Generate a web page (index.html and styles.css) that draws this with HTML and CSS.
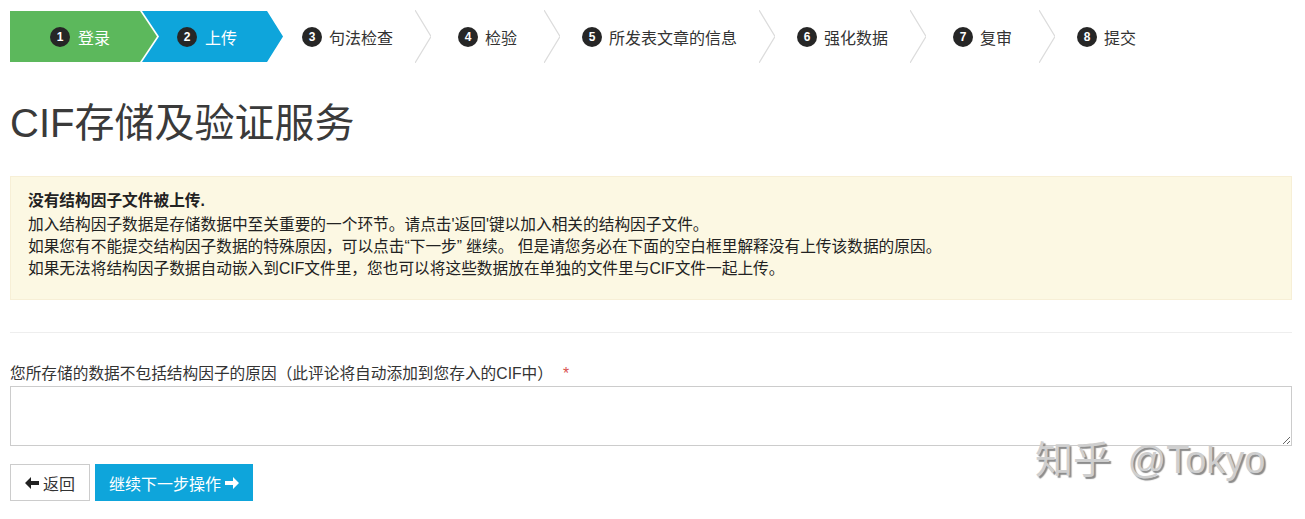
FILE: index.html
```html
<!DOCTYPE html>
<html lang="zh-CN">
<head>
  <meta charset="UTF-8" />
  <meta name="viewport" content="width=device-width, initial-scale=1.0"/>
  <title>CIF存储及验证服务</title>
  <link rel="stylesheet" href="styles.css">
</head>
<body>
<div class="page">

  <!-- 步骤条 -->
  <div class="steps">
    <div class="step done"><span class="num">1</span><span>登录</span></div>
    <div class="step current"><span class="num">2</span><span>上传</span></div>
    <div class="step"><span class="num">3</span><span>句法检查</span></div>
    <svg class="chevron" viewBox="0 0 16 53"><polyline points="0,0 16,26.5 0,53"/></svg>
    <div class="step short"><span class="num">4</span><span>检验</span></div>
    <svg class="chevron" viewBox="0 0 16 53"><polyline points="0,0 16,26.5 0,53"/></svg>
    <div class="step"><span class="num">5</span><span>所发表文章的信息</span></div>
    <svg class="chevron" viewBox="0 0 16 53"><polyline points="0,0 16,26.5 0,53"/></svg>
    <div class="step"><span class="num">6</span><span>强化数据</span></div>
    <svg class="chevron" viewBox="0 0 16 53"><polyline points="0,0 16,26.5 0,53"/></svg>
    <div class="step short"><span class="num">7</span><span>复审</span></div>
    <svg class="chevron" viewBox="0 0 16 53"><polyline points="0,0 16,26.5 0,53"/></svg>
    <div class="step"><span class="num">8</span><span>提交</span></div>
  </div>

  <h1 class="title">CIF存储及验证服务</h1>

  <div class="alert">
    <strong class="alert-title">没有结构因子文件被上传.</strong>
    <div>加入结构因子数据是存储数据中至关重要的一个环节。请点击'返回'键以加入相关的结构因子文件。</div>
    <div>如果您有不能提交结构因子数据的特殊原因，可以点击“下一步” 继续。 但是请您务必在下面的空白框里解释没有上传该数据的原因。</div>
    <div>如果无法将结构因子数据自动嵌入到CIF文件里，您也可以将这些数据放在单独的文件里与CIF文件一起上传。</div>
  </div>

  <hr class="divider">

  <label class="field-label" for="reason">您所存储的数据不包括结构因子的原因（此评论将自动添加到您存入的CIF中）<span class="req">*</span></label>
  <textarea class="field" id="reason"></textarea>

  <div class="actions">
    <button class="btn btn-back">
      <svg class="icon" viewBox="0 0 14 12"><path d="M0 6 L6 0 V4 H14 V8 H6 V12 Z"/></svg>返回
    </button>
    <button class="btn btn-next">继续下一步操作
      <svg class="icon" viewBox="0 0 14 12"><path d="M14 6 L8 0 V4 H0 V8 H8 V12 Z"/></svg>
    </button>
  </div>

  <div class="watermark">知乎 @Tokyo</div>
</div>
</body>
</html>
```

FILE: styles.css
```css
body {
  font-family: "Liberation Sans", "Noto Sans CJK SC", sans-serif;
  background: #fff;
  color: #333;
  margin: 0;
}

.page {
  position: relative;
  padding: 11px 13px 0 10px;
}

/* 步骤条 */
.steps {
  display: flex;
  align-items: center;
  height: 51px;
}

.step {
  display: flex;
  align-items: center;
  justify-content: center;
  gap: 7px;
  height: 51px;
  padding: 0 22px;
  font-size: 16px;
  color: #333;
  white-space: nowrap;
  box-sizing: border-box;
}

.step.short {
  min-width: 113px;
}

.step.done {
  background-color: #5cb85c;
  color: #fff;
  gap: 8px;
  padding: 0 47px 0 40px;
  clip-path: polygon(0 0, calc(100% - 17px) 0, 100% 50%, calc(100% - 17px) 100%, 0 100%);
}

.step.current {
  background-color: #0ea5db;
  color: #fff;
  gap: 8px;
  margin-left: -15px;
  padding: 0 46px 0 35px;
  clip-path: polygon(0 0, calc(100% - 16px) 0, 100% 50%, calc(100% - 16px) 100%, 0 100%, 17px 50%);
}

.step.current + .step {
  padding-left: 19px;
}

.num {
  width: 20px;
  height: 20px;
  border-radius: 50%;
  background-color: #262626;
  color: #fff;
  font-size: 12px;
  font-weight: bold;
  display: flex;
  align-items: center;
  justify-content: center;
  flex-shrink: 0;
}

.chevron {
  width: 16px;
  height: 53px;
  flex-shrink: 0;
}

.chevron polyline {
  fill: none;
  stroke: #dcdcdc;
  stroke-width: 1.2;
}

/* 标题 */
.title {
  font-size: 40px;
  font-weight: normal;
  line-height: 44px;
  color: #3a3a3a;
  margin: 39px 0 31px;
}

/* 提示框 */
.alert {
  background-color: #fcf8e3;
  border: 1px solid #f7efd6;
  padding: 13px 17px 19px;
  font-size: 15.7px;
  line-height: 22px;
  color: #222;
}

.alert-title {
  display: block;
  margin-bottom: 2px;
}

.divider {
  border: none;
  border-top: 1px solid #eee;
  margin: 32px 0 30px;
}

.field-label {
  display: block;
  font-size: 15.7px;
  line-height: 22px;
  margin-bottom: 1px;
  color: #333;
}

.req {
  color: #d9534f;
  margin-left: 10px;
}

.field {
  display: block;
  width: 100%;
  height: 60px;
  box-sizing: border-box;
  border: 1px solid #ccc;
  resize: vertical;
  margin: 0;
}

/* 按钮 */
.actions {
  display: flex;
  gap: 5px;
  margin-top: 18px;
}

.btn {
  height: 37px;
  font-family: inherit;
  font-size: 16px;
  display: flex;
  align-items: center;
  justify-content: center;
  gap: 4px;
  cursor: pointer;
  box-sizing: border-box;
}

.btn-back {
  width: 80px;
  background-color: #fff;
  border: 1px solid #ccc;
  color: #333;
}

.btn-next {
  width: 158px;
  background-color: #0ea5db;
  border: 1px solid #0ea5db;
  color: #fff;
}

.icon {
  width: 14px;
  height: 12px;
  fill: currentColor;
}

.btn-back .icon {
  fill: #222;
}

/* 水印 */
.watermark {
  position: absolute;
  left: 1035px;
  top: 438px;
  font-size: 38px;
  line-height: 44px;
  word-spacing: 6px;
  color: #cfcfcf;
  text-shadow: 2px 2px 1px #8c8c8c;
  white-space: nowrap;
  pointer-events: none;
}
```
